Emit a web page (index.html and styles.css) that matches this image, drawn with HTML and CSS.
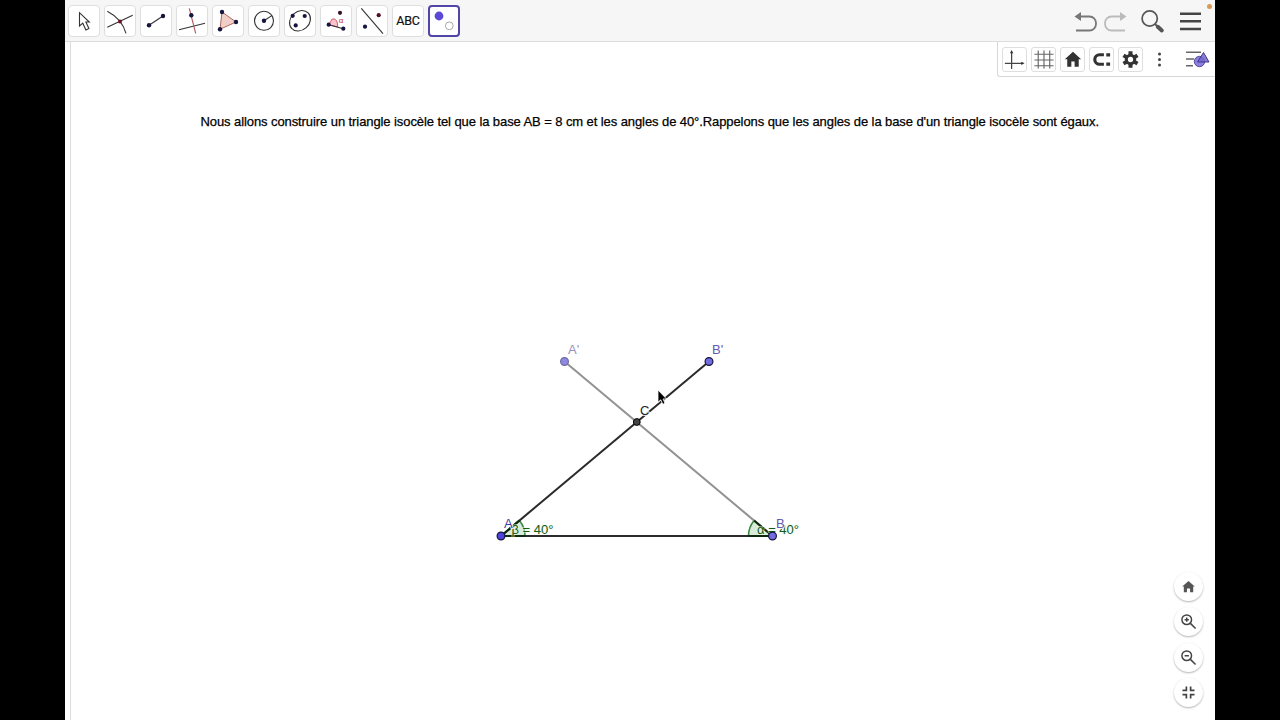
FILE: index.html
```html
<!DOCTYPE html>
<html lang="fr">
  <head>
    <meta charset="UTF-8" />
    <meta name="viewport" content="width=device-width, initial-scale=1.0" />
    <title>Triangle isocèle</title>
    <link rel="stylesheet" href="styles.css" />
  </head>

  <body>
    <div class="app">
      <header class="toolbar">
        <div class="tools">
          <button class="tool">
            <svg viewBox="1 1 30 30"><path class="thin" fill="#fff" d="M11.5 7.7V21l3.300-2.800 3.100 6.800 3-1.400-3-6.600H21.300z" /></svg>
          </button>
          <button class="tool">
            <svg viewBox="1 1 30 30">
              <path class="thin" d="M3.3 6.3Q18 14 22 28.3M3.3 22.3L28.7 10.3" />
              <circle cx="16" cy="16.6" r="2" fill="#6b1528" />
            </svg>
          </button>
          <button class="tool">
            <svg viewBox="1 1 30 30">
              <path class="thin" d="M9 20.3L23 11" />
              <circle class="dot" cx="9" cy="20.3" r="2.2" />
              <circle class="dot" cx="23" cy="11" r="2.2" />
            </svg>
          </button>
          <button class="tool">
            <svg viewBox="1 1 30 30">
              <path class="thin" d="M3 24.8L29 18.2" />
              <path class="thin red" d="M13.3 3.3L19.7 28.3" />
              <circle class="dot" cx="15.3" cy="10.3" r="2.2" />
            </svg>
          </button>
          <button class="tool">
            <svg viewBox="1 1 30 30">
              <path d="M10 7l14 10L8 24.3z" fill="#efcfc7" stroke="#b0685c" />
              <circle class="dot" cx="10" cy="7" r="2.2" />
              <circle class="dot" cx="24" cy="17" r="2.2" />
              <circle class="dot" cx="8" cy="24.3" r="2.2" />
            </svg>
          </button>
          <button class="tool">
            <svg viewBox="1 1 30 30">
              <circle class="thin" cx="16" cy="15.8" r="9.5" />
              <path class="thin" d="M16 15.8l8.2-5.4" />
              <circle class="dot" cx="16" cy="15.8" r="2.2" />
            </svg>
          </button>
          <button class="tool">
            <svg viewBox="1 1 30 30">
              <ellipse class="thin" cx="16" cy="15.8" rx="11.3" ry="9.3" transform="rotate(-42 16 15.8)" />
              <circle class="dot" cx="8.7" cy="10.8" r="2.1" />
              <circle class="dot" cx="20.7" cy="11" r="2.1" />
              <circle class="dot" cx="11.7" cy="20.4" r="2.1" />
            </svg>
          </button>
          <button class="tool">
            <svg viewBox="1 1 30 30">
              <path d="M8.7 19.7l3.500-5.700q5.500-1.200 5.500 8z" fill="#fbc4cc" stroke="#d04a5c" stroke-width="0.9" />
              <path class="thin" d="M8.7 19.7l14.6 4" />
              <circle class="dot" cx="8.7" cy="19.7" r="2.1" />
              <circle class="dot" cx="23.3" cy="23.7" r="2.1" />
              <circle cx="20" cy="7.8" r="2.1" fill="#3a1028" />
              <text class="alpha" x="18.8" y="18.2">α</text>
            </svg>
          </button>
          <button class="tool">
            <svg viewBox="1 1 30 30">
              <path class="thin" d="M5.3 3.3L27 28.7" />
              <circle cx="22.7" cy="10.2" r="2.1" fill="#4d1020" />
              <circle class="dot" cx="9" cy="21.7" r="2.1" />
            </svg>
          </button>
          <button class="tool tool-text">ABC</button>
          <button class="tool active">
            <svg viewBox="2 2 28 28">
              <circle cx="11" cy="11" r="4.4" fill="#5b48d6" />
              <circle cx="21.3" cy="20.8" r="3.9" fill="#fff" stroke="#aaa" />
            </svg>
          </button>
        </div>

        <div class="actions">
          <svg class="undo" viewBox="0 0 28 28">
            <path d="M5 9.5H17.500a6.500 6.500 0 0 1 6.500 6.500v1a6.500 6.500 0 0 1-6.500 6.500H4" fill="none" stroke="#777" stroke-width="1.8" />
            <path d="M2.5 9.5L9 5v9z" fill="#777" />
          </svg>
          <svg class="redo" viewBox="0 0 28 28">
            <path d="M23 9.5H10.500a6.500 6.500 0 0 0-6.500 6.500v1a6.500 6.500 0 0 0 6.500 6.500H24" fill="none" stroke="#bbb" stroke-width="1.8" />
            <path d="M25.5 9.5L19 5v9z" fill="#bbb" />
          </svg>
          <svg class="search" viewBox="0 0 28 28">
            <circle cx="11.7" cy="11.500" r="7.6" fill="none" stroke="#555" stroke-width="1.7" />
            <path d="M17 17l3 3" stroke="#555" stroke-width="1.8" />
            <path d="M19.8 19.8l4 3.700" stroke="#555" stroke-width="4" stroke-linecap="round" />
          </svg>
          <svg class="menu" viewBox="0 0 28 28">
            <path d="M4 6.700h21M4 14.300h21M4 22h21" stroke="#444" stroke-width="2.4" />
          </svg>
        </div>
        <span class="notice"></span>
      </header>

      <main class="view">
        <svg class="drawing" viewBox="71 42 1144 678">
          <text class="statement" x="200.5" y="126" textLength="898.5">Nous allons construire un triangle isocèle tel que la base AB = 8 cm et les angles de 40°.Rappelons que les angles de la base d'un triangle isocèle sont égaux.</text>

          <!-- angles -->
          <path class="angle" d="M501 536h24a24 24 0 0 0-5.6-15.4z" />
          <path class="angle" d="M772.5 536h-24a24 24 0 0 1 5.6-15.4z" />

          <!-- segments -->
          <path class="segment faded" d="M772.5 536L564.5 361.5" />
          <path class="segment" d="M501 536H772.5" />
          <path class="segment" d="M501 536L709 361.5" />
          <path class="arm" d="M501 536h24M501 536l18.4-15.4M772.5 536h-24M772.5 536l-18.4-15.4" />

          <text class="label green" x="511.5" y="534">β = 40°</text>
          <text class="label green" x="757" y="534">α = 40°</text>

          <circle class="point" cx="501" cy="536" r="3.9" />
          <circle class="point light" cx="772.5" cy="536" r="3.9" />
          <circle class="point light" cx="709" cy="361.5" r="3.9" />
          <circle class="point light faded" cx="564.5" cy="361.5" r="3.9" />
          <circle cx="636.8" cy="422" r="3.4" fill="#444" stroke="#000" />

          <text class="label blue" x="504" y="528">A</text>
          <text class="label violet" x="776" y="528">B</text>
          <text class="label violet faded" x="568" y="353.500">A'</text>
          <text class="label violet" x="712" y="353.500">B'</text>
          <text class="label" x="640" y="415">C</text>

          <!-- mouse pointer -->
          <path d="M658 390v12.3l2.8-2.5 2 4.500 2.200-1-2-4.300h3.600z" fill="#000" stroke="#fff" stroke-width="0.8" />
        </svg>

        <div class="stylebar">
          <button class="option">
            <svg viewBox="0 0 24 24">
              <path d="M9 4v18M2 16h19" stroke="#444" stroke-width="1.300" fill="none" />
              <path d="M9 2L7.300 5.500h3.400zM22.500 16L19 14.300v3.400z" fill="#333" />
            </svg>
          </button>
          <button class="option">
            <svg viewBox="0 0 24 24"><path d="M6.5 2.500v19M12.500 2.500v19M18.500 2.500v19M2.500 6.500h20M2.500 12.500h20M2.500 18.500h20" stroke="#666" stroke-width="1.200" fill="none" /></svg>
          </button>
          <button class="option">
            <svg viewBox="0 0 24 24"><path d="M12.500 4l8.500 7.700h-2.500V19.500h-4.300v-5.500h-3.400v5.500H6.500v-7.800H4z" fill="#333" /></svg>
          </button>
          <button class="option">
            <svg viewBox="0 0 24 24">
              <path d="M14.500 7h-4.500a5 5 0 0 0 0 10H14.500" fill="none" stroke="#333" stroke-width="3.300" />
              <path d="M17 5.500h4v3.300h-4zM17 15.200h4v3.300h-4z" fill="#333" />
            </svg>
          </button>
          <button class="option">
            <svg viewBox="0 0 24 24">
              <g stroke="#333" stroke-width="4.2">
                <path d="M12 3.500v17M4.700 7.700l14.600 8.600M4.700 16.300l14.600-8.600" />
              </g>
              <circle cx="12" cy="12" r="4.4" fill="#fff" stroke="#333" stroke-width="3.3" />
            </svg>
          </button>
          <svg class="more" viewBox="0 0 25 25">
            <circle cx="12.5" cy="7" r="1.5" /><circle cx="12.5" cy="12.5" r="1.5" /><circle cx="12.5" cy="18" r="1.5" />
          </svg>
          <svg class="views" viewBox="0 0 28 24">
            <path d="M3 5.3h15M3 12h8M3 18.7h7" stroke="#666" stroke-width="1.5" />
            <circle cx="16.500" cy="14.5" r="5.2" fill="#8b7fe0" stroke="#554a9c" />
            <path d="M20.500 5.500l5.500 9.500H14.500z" fill="#7568cc" fill-opacity="0.850" stroke="#3f3784" />
          </svg>
        </div>

        <div class="zoombar">
          <button class="round">
            <svg viewBox="0 0 24 24"><path d="M12 3l10 9H19.500V21h-5v-6h-5v6H4.500v-9H2z" fill="#555" /></svg>
          </button>
          <button class="round">
            <svg viewBox="0 0 24 24"><path class="lens" d="M14.3 14.3L22 22M9.5 6.500v6M6.500 9.5h6" /><circle class="lens" cx="9.5" cy="9.5" r="6.8" /></svg>
          </button>
          <button class="round">
            <svg viewBox="0 0 24 24"><path class="lens" d="M14.3 14.3L22 22M6.500 9.5h6" /><circle class="lens" cx="9.5" cy="9.5" r="6.8" /></svg>
          </button>
          <button class="round">
            <svg viewBox="0 0 24 24"><path d="M3.5 9H9V3.500M20.5 9H15V3.500M3.5 15H9v5.500M20.5 15H15v5.500" fill="none" stroke="#444" stroke-width="2.4" /></svg>
          </button>
        </div>
      </main>
    </div>
  </body>
</html>
```

FILE: styles.css
```css
* {
  box-sizing: border-box;
  margin: 0;
  padding: 0;
}

body {
  background: #000;
  font-family: "Liberation Sans", Arial, sans-serif;
}

svg {
  display: block;
}

button {
  display: flex;
  justify-content: center;
  align-items: center;
  background: #fff;
  border: 1px solid #dedede;
}

.app {
  display: flex;
  flex-direction: column;
  width: 1150px;
  height: 720px;
  margin: 0 auto;
  background: #fff;
  overflow: hidden;
}

/* toolbar */
.toolbar {
  position: relative;
  display: flex;
  justify-content: space-between;
  align-items: center;
  height: 42px;
  padding: 0 11px 0 3px;
  background: #f6f6f6;
  border-bottom: 1px solid #dcdcdc;
}

.tools {
  display: flex;
  gap: 4px;
}

.tool {
  width: 32px;
  height: 32px;
  border-radius: 4px;
}

.tool svg {
  width: 100%;
  height: 100%;
}

.tool-text {
  font-family: Roboto, sans-serif;
  font-size: 12.5px;
  letter-spacing: -0.2px;
  -webkit-text-stroke: 0.2px #111;
  color: #111;
}

.tool.active {
  border: 2px solid #5145a8;
}

.thin {
  fill: none;
  stroke: #333;
  stroke-width: 1.1;
}

path.thin[fill] {
  fill: #fff;
}

.thin.red {
  stroke: #b5535a;
}

.dot {
  fill: #15153f;
}

.alpha {
  font-size: 8px;
  fill: #c02840;
}

.actions {
  display: flex;
}

.actions svg {
  width: 28px;
  height: 28px;
}

.redo {
  margin-left: 1px;
}

.search {
  margin-left: 9px;
}

.menu {
  margin-left: 10px;
}

.notice {
  position: absolute;
  top: 4px;
  right: 3px;
  width: 5px;
  height: 5px;
  border-radius: 50%;
  background: #d99a58;
}

/* graphics view */
.view {
  position: relative;
  flex: 1;
  margin-left: 5px;
  border-left: 1px solid #ddd;
}

.drawing {
  width: 1144px;
  height: 678px;
}

.statement {
  font-size: 13px;
  stroke: #000;
  stroke-width: 0.25;
}

.segment {
  stroke: #2b2b2b;
  stroke-width: 2;
}

.arm {
  fill: none;
  stroke: #0c2a0c;
  stroke-width: 2;
}

.angle {
  fill: #d9ecd9;
  stroke: #3d8a45;
  stroke-width: 1.6;
}

.label {
  font-size: 13px;
  fill: #222;
  paint-order: stroke;
  stroke: rgba(255, 255, 255, 0.85);
  stroke-width: 2;
}

.label.green {
  fill: #145a14;
  stroke: rgba(235, 250, 235, 0.5);
}

.label.blue {
  fill: #443aa8;
}

.label.violet {
  fill: #6259b5;
}

.point {
  fill: #4d42dc;
  stroke: #15153a;
  stroke-width: 1.2;
}

.point.light {
  fill: #736be0;
}

.segment.faded {
  stroke: #929292;
}

.point.faded {
  fill: #8e88e2;
  stroke: #6e6ca0;
}

.label.faded {
  fill: #9690bd;
}

/* style bar, over the top right corner of the view */
.stylebar {
  position: absolute;
  top: 0;
  right: 0;
  display: flex;
  align-items: center;
  gap: 4px;
  width: 218px;
  height: 35px;
  padding-left: 4px;
  background: #fff;
  border-left: 1px solid #d8d8d8;
  border-bottom: 1px solid #d8d8d8;
  border-bottom-left-radius: 3px;
}

.option {
  width: 25px;
  height: 25px;
  border-radius: 3px;
}

.option svg {
  width: 23px;
  height: 23px;
}

.more {
  width: 25px;
  height: 25px;
  fill: #444;
}

.views {
  width: 28px;
  height: 24px;
  margin-left: 7px;
}

/* zoom buttons */
.zoombar {
  position: absolute;
  right: 12px;
  bottom: 13px;
  display: flex;
  flex-direction: column;
  gap: 6.3px;
}

.round {
  width: 29px;
  height: 29px;
  border: none;
  border-radius: 50%;
  box-shadow: 0 1px 2px rgba(0, 0, 0, 0.3);
}

.round svg {
  width: 17px;
  height: 17px;
}

.round:first-child svg {
  width: 15px;
  height: 15px;
}

.lens {
  fill: none;
  stroke: #444;
  stroke-width: 2.1;
}
```
